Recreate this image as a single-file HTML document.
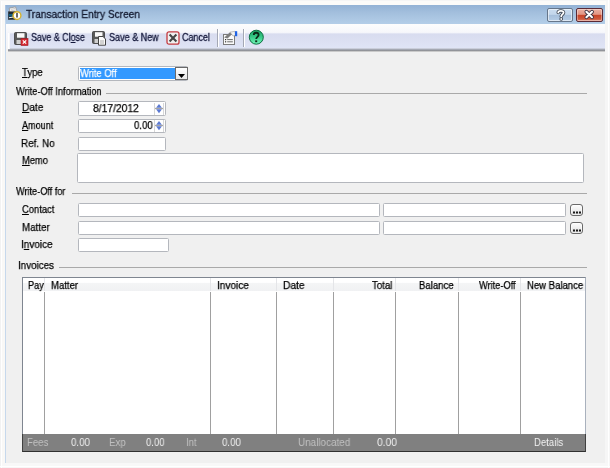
<!DOCTYPE html>
<html><head><meta charset="utf-8">
<style>
*{margin:0;padding:0;box-sizing:border-box}
html,body{width:610px;height:468px;overflow:hidden;background:#f6f6f6;font-family:"Liberation Sans",sans-serif;font-size:11px;color:#000}
.a{position:absolute}
.t{position:absolute;white-space:nowrap;line-height:13px;font-size:11px;transform-origin:0 0;will-change:transform;-webkit-text-stroke:0.25px currentColor}
.u{text-decoration:underline;text-underline-offset:1px}
.fld{position:absolute;background:#fff;border:1px solid #b4b7bd;border-radius:1.5px}
.gl{position:absolute;height:1px;background:#a9a9a9}
.vl{position:absolute;top:292px;width:1px;height:142px;background:#a0a0a0}
svg{position:absolute;overflow:visible}
</style></head><body>
<!-- outer margins -->
<div class="a" style="left:0;top:0;width:1px;height:468px;background:#f2f2f2"></div>
<div class="a" style="left:1px;top:0;width:1px;height:468px;background:#ffffff"></div>
<div class="a" style="left:2px;top:1px;width:604px;height:4px;background:#fcfbf9"></div>
<div class="a" style="left:2px;top:5px;width:3px;height:460px;background:#f9f8f6"></div>
<div class="a" style="left:0;top:0;width:610px;height:1px;background:#f5f5f5"></div>
<div class="a" style="left:605px;top:5px;width:3px;height:460px;background:#f6f6f6"></div>
<div class="a" style="left:608px;top:0;width:1px;height:468px;background:#ffffff"></div>
<div class="a" style="left:2px;top:463px;width:606px;height:3px;background:#f8f8f8"></div>
<div class="a" style="left:0;top:466px;width:610px;height:1px;background:#ffffff"></div>
<!-- frame -->
<div class="a" style="left:5px;top:5px;width:1px;height:458px;background:#c6d8ec"></div>
<div class="a" style="left:6px;top:52px;width:599px;height:411px;background:#f0f0f0"></div>
<!-- title bar -->
<div class="a" style="left:5px;top:5px;width:600px;height:19px;background:linear-gradient(#93b2d5,#a3bfdd 40%,#b4cee8)"></div>
<div class="a" style="left:5px;top:5px;width:1px;height:19px;background:linear-gradient(#a8c2e0,#c4d8ee)"></div>
<!-- toolbar -->
<div class="a" style="left:6px;top:24px;width:599px;height:28px;background:linear-gradient(#fdfdfd 0,#f6f7fb 30%,#d8dcef 36%,#dfe4f5 86%,#b5b8c0 89%,#9599a5 93%,#8f8f8f 96%,#fafafa 100%)"></div>
<div class="a" style="left:6px;top:32px;width:4px;height:17px;background:linear-gradient(#f6f7fb,#f4f4f6)"></div>
<div class="a" style="left:8px;top:33px;width:1px;height:16px;background:#ffffff"></div>
<div class="a" style="left:6px;top:49px;width:2px;height:3px;background:#f4f3f1"></div>
<!-- group lines -->
<div class="gl" style="left:106px;top:93px;width:481px"></div>
<div class="gl" style="left:72px;top:193px;width:515px"></div>
<div class="gl" style="left:59px;top:267px;width:528px"></div>
<!-- combo -->
<div class="fld" style="left:78px;top:66px;width:110px;height:15px"></div>
<div class="a" style="left:80px;top:68px;width:95px;height:11px;background:#3399ff"></div>
<!-- fields -->
<div class="fld" style="left:78px;top:101px;width:88px;height:15px"></div>
<div class="fld" style="left:78px;top:119px;width:88px;height:14px"></div>
<div class="fld" style="left:78px;top:137px;width:88px;height:14px"></div>
<div class="fld" style="left:77px;top:153px;width:507px;height:30px"></div>
<div class="fld" style="left:78px;top:203px;width:302px;height:14px"></div>
<div class="fld" style="left:383px;top:203px;width:183px;height:14px"></div>
<div class="fld" style="left:78px;top:221px;width:302px;height:14px"></div>
<div class="fld" style="left:383px;top:221px;width:183px;height:14px"></div>
<div class="fld" style="left:78px;top:238px;width:91px;height:14px"></div>
<!-- grid -->
<div class="a" style="left:22px;top:277px;width:564px;height:175px;background:#fff;border:1px solid #7f8690;border-right-color:#a9b1bd"></div>
<div class="a" style="left:23px;top:278px;width:562px;height:13px;background:linear-gradient(#ffffff 0,#ffffff 34%,#f4f5f6 40%,#f0f1f3 100%)"></div>
<div class="a" style="left:44px;top:278px;width:1px;height:13px;background:#e4e5e8"></div><div class="a" style="left:210px;top:278px;width:1px;height:13px;background:#e4e5e8"></div><div class="a" style="left:276px;top:278px;width:1px;height:13px;background:#e4e5e8"></div><div class="a" style="left:333px;top:278px;width:1px;height:13px;background:#e4e5e8"></div><div class="a" style="left:395px;top:278px;width:1px;height:13px;background:#e4e5e8"></div><div class="a" style="left:458px;top:278px;width:1px;height:13px;background:#e4e5e8"></div><div class="a" style="left:520px;top:278px;width:1px;height:13px;background:#e4e5e8"></div>
<div class="vl" style="left:44px"></div>
<div class="vl" style="left:210px"></div>
<div class="vl" style="left:276px"></div>
<div class="vl" style="left:333px"></div>
<div class="vl" style="left:395px"></div>
<div class="vl" style="left:458px"></div>
<div class="vl" style="left:520px"></div>
<div class="a" style="left:22px;top:434px;width:564px;height:18px;background:#808080;border-left:1px solid #404040;border-bottom:1px solid #303030;border-right:1px solid #404040"></div>

<!-- title icon -->
<svg style="left:7px;top:6px" width="16" height="16" viewBox="0 0 16 16">
 <path d="M2.2 2.2 L8.5 0.8 L10.2 5.8 L3 6.8 Z" fill="#f4f4f4" stroke="#909090" stroke-width="0.8"/>
 <path d="M3.8 3.4 L8.2 2.4 M4.2 4.8 L8.8 4" stroke="#b8b8b8" stroke-width="0.7"/>
 <rect x="1.4" y="5.8" width="7.6" height="7.6" fill="#1c2834" stroke="#303030" stroke-width="0.6"/>
 <rect x="1.8" y="8" width="7" height="2.4" fill="#0f5a7e"/>
 <path d="M2 11.8 L6.5 11" stroke="#e8eef4" stroke-width="1.1"/>
 <circle cx="10" cy="9.6" r="3.9" fill="#fff" stroke="#d6b22e" stroke-width="1.4"/>
 <path d="M10 7.5 V11" stroke="#3a3a3a" stroke-width="1.5" stroke-linecap="round"/>
</svg>
<!-- help / close buttons -->
<div class="a" style="left:547px;top:8px;width:26px;height:14px;border:1px solid #66768a;border-radius:2px;background:linear-gradient(#cadcef 0,#c3d6eb 45%,#a6bfdb 50%,#b6cde6 100%);box-shadow:inset 0 0 0 1px rgba(255,255,255,.55)"></div>
<svg style="left:556px;top:9px" width="10" height="12" viewBox="0 0 10 12">
 <path d="M2.2 3.6 C2.2 1.6 7.6 1.2 7.6 3.6 C7.6 5.4 5.2 5.4 5.2 7.4" fill="none" stroke="#3c4450" stroke-width="3.4" stroke-linecap="round"/>
 <circle cx="5.2" cy="10" r="1.8" fill="#3c4450"/>
 <path d="M2.2 3.6 C2.2 1.6 7.6 1.2 7.6 3.6 C7.6 5.4 5.2 5.4 5.2 7.4" fill="none" stroke="#fff" stroke-width="1.8" stroke-linecap="round"/>
 <circle cx="5.2" cy="10" r="0.9" fill="#fff"/>
</svg>
<div class="a" style="left:576px;top:8px;width:27px;height:14px;border:1px solid #5a2a35;border-radius:2px;background:linear-gradient(#eab0a2 0,#e39584 45%,#c84327 50%,#cf5a3e 85%,#e49a88 100%);box-shadow:inset 0 0 0 1px rgba(255,255,255,.35)"></div>
<svg style="left:583px;top:9px" width="13" height="12" viewBox="0 0 13 12">
 <path d="M3.4 2.8 L9 8.2 M9 2.8 L3.4 8.2" stroke="#3a3040" stroke-width="3.8" stroke-linecap="round"/>
 <path d="M3.4 2.8 L9 8.2 M9 2.8 L3.4 8.2" stroke="#fff" stroke-width="2.1" stroke-linecap="round"/>
</svg>

<!-- toolbar icons -->
<svg style="left:14px;top:32px" width="14" height="14" viewBox="0 0 14 14">
 <path d="M0.5 1.5 Q0.5 0.5 1.5 0.5 H11.5 Q12.5 0.5 12.5 1.5 V12.5 H1.5 Q0.5 12.5 0.5 11.5 Z" fill="#5a5a5a" stroke="#3a3a3a" stroke-width="0.8"/>
 <rect x="3" y="1.2" width="7.5" height="4.5" fill="#fafafa"/>
 <path d="M2.5 8 H7 V12 H2.5 Z" fill="#cfcfcf"/>
 <rect x="7" y="6.5" width="7" height="7" fill="#d42a33" stroke="#a01820" stroke-width="0.6"/>
 <path d="M8.8 8.3 L12.2 11.7 M12.2 8.3 L8.8 11.7" stroke="#fff" stroke-width="1.2"/>
</svg>
<svg style="left:92px;top:31px" width="15" height="15" viewBox="0 0 15 15">
 <path d="M0.5 1.5 Q0.5 0.5 1.5 0.5 H11.5 Q12.5 0.5 12.5 1.5 V12.5 H1.5 Q0.5 12.5 0.5 11.5 Z" fill="#5a5a5a" stroke="#3a3a3a" stroke-width="0.8"/>
 <rect x="3" y="1.2" width="7.5" height="4.5" fill="#fafafa"/>
 <path d="M2.5 8 H6 V12 H2.5 Z" fill="#cfcfcf"/>
 <path d="M6.5 5.5 H11 L13.5 8 V14.2 H6.5 Z" fill="#fbfbfb" stroke="#444" stroke-width="1"/>
 <path d="M8 10 H12 M8 12 H12" stroke="#999" stroke-width="0.8"/>
</svg>
<svg style="left:166px;top:31px" width="14" height="14" viewBox="0 0 14 14">
 <rect x="1" y="0.8" width="12" height="12.4" rx="2" fill="#f0f0f0" stroke="#c43a40" stroke-width="1.3"/>
 <path d="M3.6 3.6 L10.4 10.4 M10.4 3.6 L3.6 10.4" stroke="#454545" stroke-width="2.1"/>
</svg>
<div class="a" style="left:217px;top:29px;width:1px;height:18px;background:#a4a8b4;box-shadow:1px 0 0 #fff"></div>
<svg style="left:220px;top:28px" width="20" height="20" viewBox="0 0 20 20">
 <rect x="3.5" y="6.5" width="11" height="10" fill="#fafafa" stroke="#7c7c7c" stroke-width="1"/>
 <rect x="5" y="11" width="1.2" height="1.2" fill="#333"/><rect x="5" y="13.2" width="1.2" height="1.2" fill="#333"/>
 <path d="M7.2 11.6 H12.8 M7.2 13.8 H12.8" stroke="#6a6a6a" stroke-width="1"/>
 <path d="M4.2 9.5 L10 4.2 L13 5.2 L7.5 10.5 Z" fill="#7e7e7e"/>
 <path d="M10 4.2 L15 3.3 L15.3 7.2 L13 8 Z" fill="#f4f4f4" stroke="#9a9a9a" stroke-width="0.6"/>
 <rect x="15" y="3.2" width="2.2" height="5" fill="#1f63e6"/>
</svg>
<div class="a" style="left:243px;top:29px;width:1px;height:18px;background:#a4a8b4;box-shadow:1px 0 0 #fff"></div>
<svg style="left:246px;top:28px" width="20" height="20" viewBox="0 0 20 20">
 <defs><linearGradient id="gg" x1="0" y1="0" x2="0" y2="1"><stop offset="0" stop-color="#1a9c62"/><stop offset="0.5" stop-color="#38cc88"/><stop offset="1" stop-color="#74f8bc"/></linearGradient></defs>
 <circle cx="10.3" cy="9.2" r="7" fill="url(#gg)" stroke="#0d6e40" stroke-width="1"/>
 <path d="M7.8 7 C7.8 4 12.6 4 12.6 7 C12.6 8.8 10.2 9 10.2 11" fill="none" stroke="#0a2a18" stroke-width="1.8"/>
 <rect x="9.2" y="12.4" width="2" height="1.8" fill="#0a2a18"/>
</svg>

<!-- combo dropdown button -->
<div class="a" style="left:175px;top:67px;width:13px;height:13px;border:1px solid #6a6a6a;background:linear-gradient(#ffffff,#f3f3f3 50%,#e8e8e8)"></div>
<svg style="left:178px;top:74px" width="7" height="4" viewBox="0 0 7 4"><path d="M0 0 H7 L3.5 4 Z" fill="#000"/></svg>

<!-- spinners -->
<svg style="left:154px;top:103px" width="11" height="12" viewBox="0 0 11 12">
 <path d="M0.5 0 V12 M9.5 0 V12" stroke="#d6d6d6" stroke-width="1"/>
 <path d="M1 5.5 H9" stroke="#a4a4a4" stroke-width="1.3"/>
 <path d="M2.1 4.8 L5 0.9 L7.9 4.8 Z" fill="#5b79d2"/>
 <path d="M2.1 6.3 L5 10.2 L7.9 6.3 Z" fill="#5b79d2"/>
</svg>
<svg style="left:154px;top:120px" width="11" height="12" viewBox="0 0 11 12">
 <path d="M0.5 0 V12 M9.5 0 V12" stroke="#d6d6d6" stroke-width="1"/>
 <path d="M1 5.5 H9" stroke="#a4a4a4" stroke-width="1.3"/>
 <path d="M2.1 4.8 L5 0.9 L7.9 4.8 Z" fill="#5b79d2"/>
 <path d="M2.1 6.3 L5 10.2 L7.9 6.3 Z" fill="#5b79d2"/>
</svg>

<!-- ellipsis buttons -->
<div class="a" style="left:570px;top:204.4px;width:13px;height:12px;border:1px solid #6a6a6a;border-radius:3px;background:linear-gradient(#fdfdfd,#f0f0f0 50%,#d4d4d4);box-shadow:inset 0 0 0 1px rgba(255,255,255,.6)"></div>
<svg style="left:572px;top:211.2px" width="9" height="3" viewBox="0 0 9 3"><rect x="1" y="0.5" width="2" height="2" fill="#1a1a1a"/><rect x="4" y="0.5" width="2" height="2" fill="#1a1a1a"/><rect x="7" y="0.5" width="2" height="2" fill="#1a1a1a"/></svg>
<div class="a" style="left:570px;top:221.6px;width:13px;height:12px;border:1px solid #6a6a6a;border-radius:3px;background:linear-gradient(#fdfdfd,#f0f0f0 50%,#d4d4d4);box-shadow:inset 0 0 0 1px rgba(255,255,255,.6)"></div>
<svg style="left:572px;top:229px" width="9" height="3" viewBox="0 0 9 3"><rect x="1" y="0.5" width="2" height="2" fill="#1a1a1a"/><rect x="4" y="0.5" width="2" height="2" fill="#1a1a1a"/><rect x="7" y="0.5" width="2" height="2" fill="#1a1a1a"/></svg>

<div class="t" style="left:25.60px;top:7.20px;transform:scaleX(0.881);font-size:11.5px;line-height:14px;color:#141a30;-webkit-text-stroke:0.3px #141a30">Transaction Entry Screen</div>
<div class="t" style="left:31.00px;top:31.40px;transform:scaleX(0.809);color:#14183a;-webkit-text-stroke:0.3px #14183a">Save &amp; Cl<span class="u">o</span>se</div>
<div class="t" style="left:108.50px;top:31.40px;transform:scaleX(0.821);color:#14183a;-webkit-text-stroke:0.3px #14183a">Save &amp; New</div>
<div class="t" style="left:182.00px;top:31.40px;transform:scaleX(0.812);color:#14183a;-webkit-text-stroke:0.3px #14183a">Cancel</div>
<div class="t" style="left:22.30px;top:66.40px;transform:scaleX(0.862);"><span class="u">T</span>ype</div>
<div class="t" style="left:80.00px;top:67.40px;transform:scaleX(0.851);color:#fff">Write Off</div>
<div class="t" style="left:16.00px;top:85.40px;transform:scaleX(0.842);">Write-Off Information</div>
<div class="t" style="left:22.30px;top:101.40px;transform:scaleX(0.918);"><span class="u">D</span>ate</div>
<div class="t" style="left:22.20px;top:118.90px;transform:scaleX(0.826);"><span class="u">A</span>mount</div>
<div class="t" style="left:21.30px;top:136.90px;transform:scaleX(0.903);">Ref. No</div>
<div class="t" style="left:22.30px;top:154.40px;transform:scaleX(0.847);"><span class="u">M</span>emo</div>
<div class="t" style="left:16.20px;top:185.40px;transform:scaleX(0.830);">Write-Off for</div>
<div class="t" style="left:22.00px;top:202.90px;transform:scaleX(0.855);"><span class="u">C</span>ontact</div>
<div class="t" style="left:22.40px;top:220.60px;transform:scaleX(0.887);">Matter</div>
<div class="t" style="left:21.09px;top:237.90px;transform:scaleX(0.906);">I<span class="u">n</span>voice</div>
<div class="t" style="left:17.81px;top:258.90px;transform:scaleX(0.892);">Invoices</div>
<div class="t" style="left:93.00px;top:102.40px;transform:scaleX(0.937);">8/17/2012</div>
<div class="t" style="left:133.60px;top:119.40px;transform:scaleX(0.876);">0.00</div>
<div class="t" style="left:27.77px;top:279.40px;transform:scaleX(0.833);">Pay</div>
<div class="t" style="left:51.33px;top:279.40px;transform:scaleX(0.867);">Matter</div>
<div class="t" style="left:216.69px;top:279.40px;transform:scaleX(0.915);">Invoice</div>
<div class="t" style="left:282.57px;top:279.40px;transform:scaleX(0.932);">Date</div>
<div class="t" style="left:371.50px;top:279.40px;transform:scaleX(0.878);">Total</div>
<div class="t" style="left:418.93px;top:279.40px;transform:scaleX(0.869);">Balance</div>
<div class="t" style="left:479.30px;top:279.40px;transform:scaleX(0.839);">Write-Off</div>
<div class="t" style="left:527.23px;top:279.40px;transform:scaleX(0.866);">New Balance</div>
<div class="t" style="left:26.63px;top:436.40px;transform:scaleX(0.874);color:#c0c0c0;-webkit-text-stroke:0">Fees</div>
<div class="t" style="left:70.50px;top:436.40px;transform:scaleX(0.886);color:#f0f0f0;-webkit-text-stroke:0">0.00</div>
<div class="t" style="left:108.91px;top:436.40px;transform:scaleX(0.889);color:#c0c0c0;-webkit-text-stroke:0">Exp</div>
<div class="t" style="left:146.20px;top:436.40px;transform:scaleX(0.867);color:#f0f0f0;-webkit-text-stroke:0">0.00</div>
<div class="t" style="left:186.44px;top:436.40px;transform:scaleX(0.858);color:#c0c0c0;-webkit-text-stroke:0">Int</div>
<div class="t" style="left:221.70px;top:436.40px;transform:scaleX(0.881);color:#f0f0f0;-webkit-text-stroke:0">0.00</div>
<div class="t" style="left:298.10px;top:436.40px;transform:scaleX(0.900);color:#c0c0c0;-webkit-text-stroke:0">Unallocated</div>
<div class="t" style="left:377.00px;top:436.40px;transform:scaleX(0.933);color:#f0f0f0;-webkit-text-stroke:0">0.00</div>
<div class="t" style="left:534.13px;top:436.40px;transform:scaleX(0.869);color:#f0f0f0;-webkit-text-stroke:0">Details</div>
</body></html>
